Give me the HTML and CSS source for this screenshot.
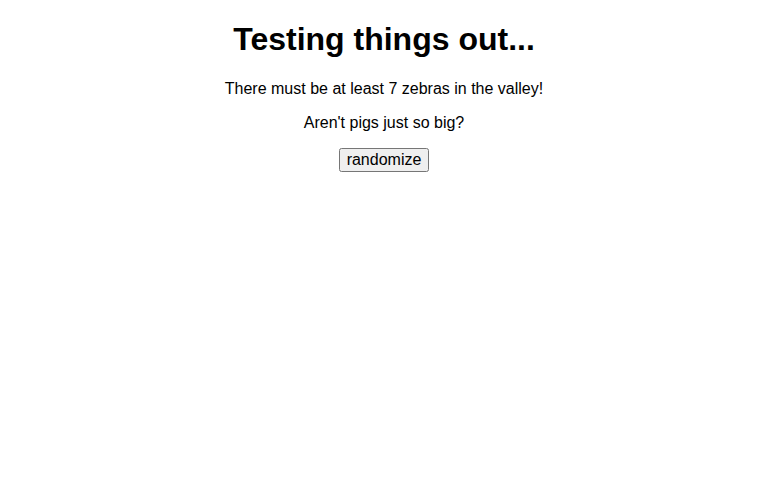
FILE: index.html
```html
<!DOCTYPE html>
<html>
<head>
<meta charset="utf-8">
<link rel="stylesheet" href="styles.css">
</head>
<body class="page">
<h1 class="title">Testing things out...</h1>
<p class="line">There must be at least 7 zebras in the valley!</p>
<p class="line">Aren't pigs just so big?</p>
<button class="btn">randomize</button>
</body>
</html>
```
FILE: styles.css
```css
.page {
  margin: 0 8px;
  font-family: "Liberation Sans", Arial, sans-serif;
  text-align: center;
  color: #000;
  background: #fff;
}
.title {
  font-size: 32px;
}
.btn {
  font-family: "Liberation Sans", Arial, sans-serif;
  font-size: 16px;
}
```
